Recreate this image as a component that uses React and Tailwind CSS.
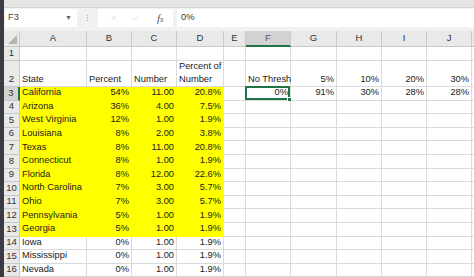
import { X, Check } from "lucide-react";

const cols = [
  { key: "A", w: 67 },
  { key: "B", w: 45 },
  { key: "C", w: 45 },
  { key: "D", w: 47 },
  { key: "E", w: 22 },
  { key: "F", w: 45 },
  { key: "G", w: 46 },
  { key: "H", w: 45 },
  { key: "I", w: 45 },
  { key: "J", w: 45 },
  { key: "K", w: 20, label: "" },
];

const states = [
  ["California", "54%", "11.00", "20.8%"],
  ["Arizona", "36%", "4.00", "7.5%"],
  ["West Virginia", "12%", "1.00", "1.9%"],
  ["Louisiana", "8%", "2.00", "3.8%"],
  ["Texas", "8%", "11.00", "20.8%"],
  ["Connecticut", "8%", "1.00", "1.9%"],
  ["Florida", "8%", "12.00", "22.6%"],
  ["North Carolina", "7%", "3.00", "5.7%"],
  ["Ohio", "7%", "3.00", "5.7%"],
  ["Pennsylvania", "5%", "1.00", "1.9%"],
  ["Georgia", "5%", "1.00", "1.9%"],
  ["Iowa", "0%", "1.00", "1.9%"],
  ["Mississippi", "0%", "1.00", "1.9%"],
  ["Nevada", "0%", "1.00", "1.9%"],
];

// row data: { n, h, cells: {A: [text, align]}, yellow }
const rows = [
  { n: 1, h: "h-[13.6px]", cells: {} },
  {
    n: 2,
    h: "h-[26.5px]",
    cells: {
      A: ["State", "l"],
      B: ["Percent", "l"],
      C: ["Number", "l"],
      D: ["Percent of\nNumber", "l"],
      F: ["No Thresh", "l"],
      G: ["5%", "r"],
      H: ["10%", "r"],
      I: ["20%", "r"],
      J: ["30%", "r"],
    },
  },
  ...states.map((s, i) => ({
    n: i + 3,
    h: "h-[13.6px]",
    yellow: i < 11,
    cells: {
      A: [s[0], "l"],
      B: [s[1], "r"],
      C: [s[2], "r"],
      D: [s[3], "r"],
      ...(i === 0
        ? { F: ["0%", "r"], G: ["91%", "r"], H: ["30%", "r"], I: ["28%", "r"], J: ["28%", "r"] }
        : {}),
    },
  })),
];

const yellowCols = ["A", "B", "C", "D"];

const Cell = ({ col, row }) => {
  const c = row.cells[col.key];
  const yellow = row.yellow && yellowCols.includes(col.key);
  const selected = row.n === 3 && col.key === "F";
  return (
    <div
      className={`relative flex h-full shrink-0 items-end border-b border-r px-[2px] pb-[1px] ${
        yellow ? "bg-[#ffff00] border-[#ffff00]" : "bg-white border-[#dadada]"
      } ${c && c[1] === "r" ? "justify-end" : "justify-start"}`}
      style={{ width: col.w }}
    >
      {c && (
        <span className="whitespace-pre leading-[12.5px] text-[#1a1a1a]">{c[0]}</span>
      )}
      {selected && (
        <>
          <div className="absolute -left-[1px] -top-[1px] h-[calc(100%+1px)] w-[calc(100%+1px)] border-2 border-[#217346]" />
          <div className="absolute -bottom-[2px] -right-[2px] h-[5px] w-[5px] border border-white bg-[#217346]" />
        </>
      )}
    </div>
  );
};

const App = () => {
  return (
    <div
      className="flex h-[277px] w-[474px] overflow-hidden bg-white text-[9.3px]"
      style={{ fontFamily: '"Liberation Sans", Arial, sans-serif' }}
    >
      <div className="h-full w-[4px] shrink-0 bg-[#3b3c43]" />
      <div className="flex min-w-0 flex-1 flex-col">
        {/* ribbon bottom edge */}
        <div className="h-[8px] shrink-0 border-b border-[#d2d2d2] bg-[#e4e4e4]" />
        {/* formula bar */}
        <div className="flex h-[23px] shrink-0 items-start bg-[#f1f1f1] pt-[1px]">
          <div className="ml-[1px] flex h-[18px] w-[72px] items-center justify-between bg-white pl-[3px] pr-[5px] text-[#444]">
            <span>F3</span>
            <span className="text-[7px] text-[#666]">▼</span>
          </div>
          <div className="flex h-[18px] w-[21px] flex-col items-center justify-center gap-[1px]">
            <div className="h-[1.5px] w-[1.5px] bg-[#b8b8b8]" />
            <div className="h-[1.5px] w-[1.5px] bg-[#b8b8b8]" />
            <div className="h-[1.5px] w-[1.5px] bg-[#b8b8b8]" />
          </div>
          <div className="flex h-[18px] w-[75px] items-center bg-white">
            <X size={10} strokeWidth={1.3} className="ml-[11px] text-[#c4c4c4]" />
            <Check size={10} strokeWidth={1.3} className="ml-[12px] text-[#c4c4c4]" />
            <span
              className="ml-[16px] text-[11px] italic text-[#555]"
              style={{ fontFamily: '"Liberation Serif", serif' }}
            >
              f<span className="text-[8px]">x</span>
            </span>
          </div>
          <div className="ml-[4px] flex h-[18px] flex-1 items-center bg-white pl-[4px] text-[#333]">
            0%
          </div>
        </div>
        {/* column headers */}
        <div className="flex h-[16px] shrink-0 bg-[#e9e9e9]">
          <div className="relative h-full w-[16px] shrink-0 border-b border-r border-[#c8c8c8]">
            <svg className="absolute bottom-[2px] right-[2px]" width="9" height="9" viewBox="0 0 9 9">
              <polygon points="9,0 9,9 0,9" fill="#b4b4b4" />
            </svg>
          </div>
          {cols.map((col) => (
            <div
              key={col.key}
              className={`flex h-full shrink-0 items-center justify-center border-r text-[9.5px] ${
                col.key === "F"
                  ? "border-b-2 border-b-[#217346] border-r-[#c8c8c8] bg-[#d3d3d3] text-[#555]"
                  : "border-b border-[#c8c8c8] text-[#333]"
              }`}
              style={{ width: col.w }}
            >
              {col.label ?? col.key}
            </div>
          ))}
        </div>
        {/* rows */}
        {rows.map((row) => (
          <div key={row.n} className={`flex shrink-0 ${row.h}`}>
            <div
              className={`flex h-full w-[16px] shrink-0 items-end justify-center border-b pb-[1px] text-[9.5px] leading-[12px] ${
                row.n === 3
                  ? "border-r-2 border-r-[#217346] border-b-[#c8c8c8] bg-[#d3d3d3] text-[#333]"
                  : "border-r border-[#c8c8c8] bg-[#e9e9e9] text-[#333]"
              }`}
            >
              {row.n}
            </div>
            {cols.map((col) => (
              <Cell key={col.key} col={col} row={row} />
            ))}
          </div>
        ))}
      </div>
    </div>
  );
};

export default App;
